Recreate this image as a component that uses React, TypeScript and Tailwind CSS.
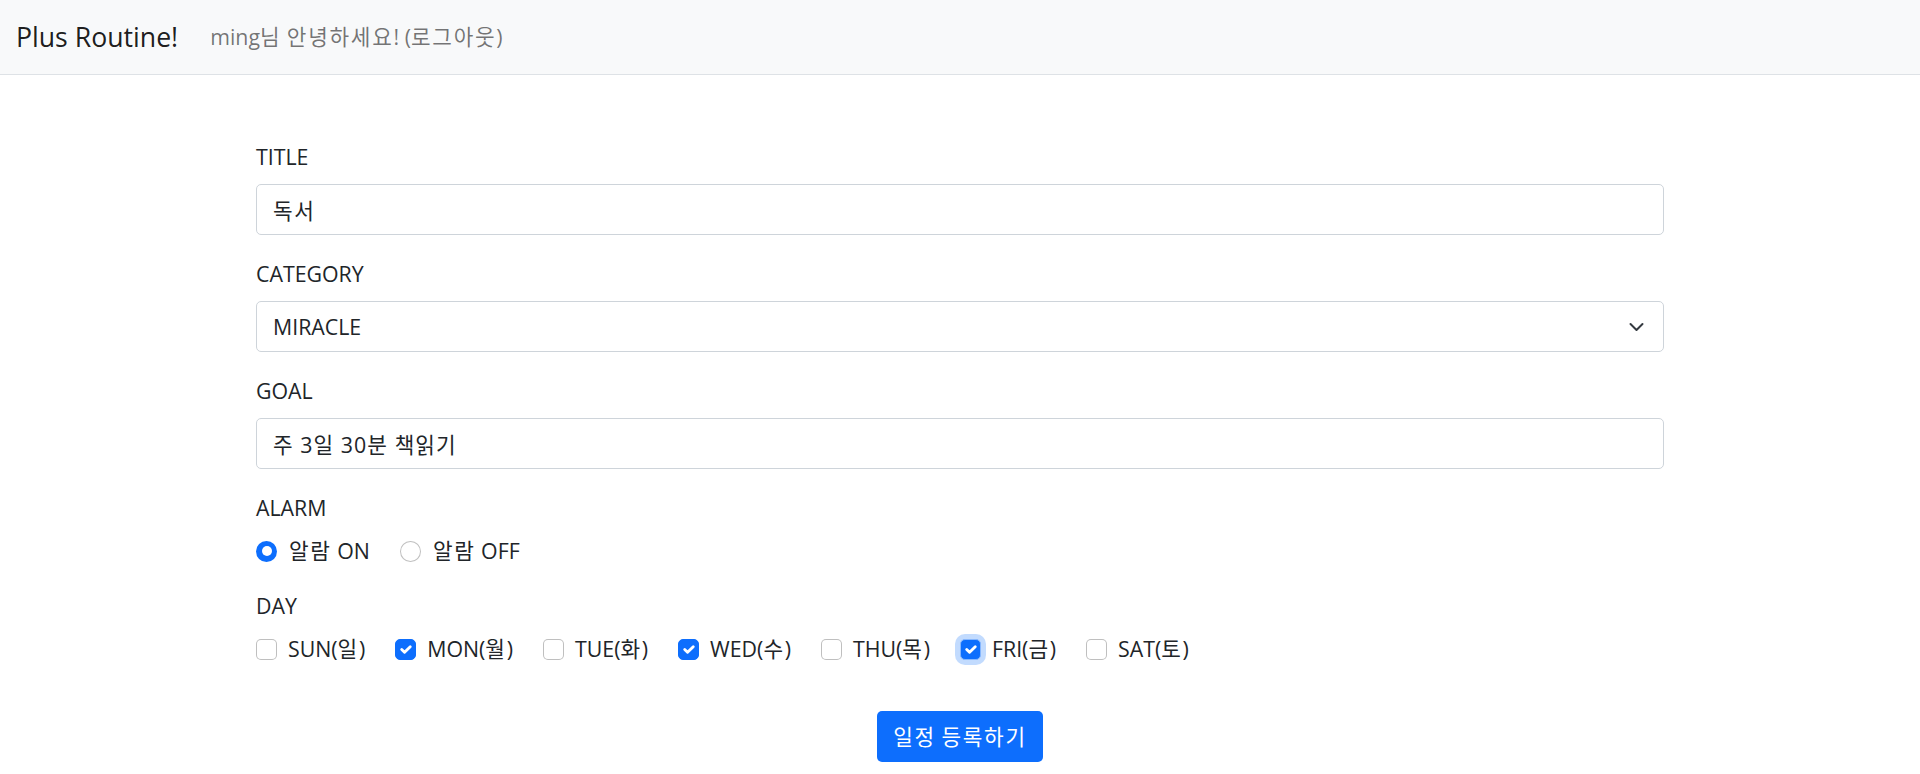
import { ReactNode } from "react";

const days = [
  { label: "SUN(일)", checked: false },
  { label: "MON(월)", checked: true },
  { label: "TUE(화)", checked: false },
  { label: "WED(수)", checked: true },
  { label: "THU(목)", checked: false },
  { label: "FRI(금)", checked: true, focus: true },
  { label: "SAT(토)", checked: false },
];

// hangul glyphs in the screenshot are a full em wide, Noto's are narrower
const K = ({ text }: { text: string }) => (
  <>
    {text.split(/([가-힣]+)/).map((part, i) =>
      /[가-힣]/.test(part) ? (
        <span key={i} className="tracking-[0.08em]">
          {part}
        </span>
      ) : (
        part
      )
    )}
  </>
);

const Field = ({ label, children }: { label: string; children: ReactNode }) => (
  <div className="mb-[23px]">
    <div className="text-[21.33px] leading-[32px] mb-[11px]">{label}</div>
    {children}
  </div>
);

const Radio = ({ label, checked }: { label: string; checked?: boolean }) => (
  <label className="inline-flex items-center mr-[30px] h-[32px]">
    <span
      className={
        checked
          ? "w-[21px] h-[21px] rounded-full bg-[#0d6efd] flex items-center justify-center"
          : "w-[21px] h-[21px] rounded-full border border-[rgba(0,0,0,0.25)] bg-white"
      }
    >
      {checked && <span className="w-[10px] h-[10px] rounded-full bg-white" />}
    </span>
    <span className="ml-[12px] text-[21.33px] leading-[32px]">
      <K text={label} />
    </span>
  </label>
);

const Check = ({ label, checked, focus }: { label: string; checked?: boolean; focus?: boolean }) => (
  <label className="inline-flex items-center mr-[30px] h-[32px]">
    <span
      className={
        (checked
          ? "bg-[#0d6efd] border-[#0d6efd] "
          : "bg-white border-[rgba(0,0,0,0.25)] ") +
        (focus ? "shadow-[0_0_0_5px_rgba(13,110,253,0.25)] border-[#86b7fe] " : "") +
        "w-[21px] h-[21px] rounded-[5px] border flex items-center justify-center"
      }
    >
      {checked && (
        <svg viewBox="0 0 20 20" className="w-[21px] h-[21px]">
          <path
            d="m6 10 3 3 6-6"
            fill="none"
            stroke="#fff"
            strokeWidth="3"
            strokeLinecap="round"
            strokeLinejoin="round"
          />
        </svg>
      )}
    </span>
    <span className="ml-[11px] text-[21.33px] leading-[32px]">
      <K text={label} />
    </span>
  </label>
);

export default function App() {
  return (
    <div className="min-h-screen bg-white text-[#212529] font-['Open_Sans','Noto_Sans_CJK_KR',sans-serif]">
      {/* Navbar */}
      <nav className="h-[75px] bg-[#f8f9fa] border-b border-[#dee2e6] flex items-center px-[16px]">
        <span className="text-[26.67px] leading-[40px] text-[rgba(0,0,0,0.9)] mr-[21px]">
          Plus Routine!
        </span>
        <a className="text-[21.33px] leading-[32px] px-[11px] text-[rgba(0,0,0,0.55)]">
          <K text="ming님 안녕하세요! (로그아웃)" />
        </a>
      </nav>

      {/* Form */}
      <form className="w-[1408px] mx-auto pt-[66px]">
        <Field label="TITLE">
          <input
            defaultValue="독서"
            className="w-full h-[51px] px-[16px] border border-[#ced4da] rounded-[5px] text-[21.33px] tracking-[0.08em] outline-none"
          />
        </Field>

        <Field label="CATEGORY">
          <div className="w-full h-[51px] pl-[16px] pr-[16px] border border-[#ced4da] rounded-[5px] flex items-center justify-between text-[21.33px]">
            <span>MIRACLE</span>
            <svg viewBox="0 0 16 16" className="w-[21px] h-[16px]">
              <path
                d="m2 5 6 6 6-6"
                fill="none"
                stroke="#343a40"
                strokeWidth="2"
                strokeLinecap="round"
                strokeLinejoin="round"
              />
            </svg>
          </div>
        </Field>

        <Field label="GOAL">
          <input
            defaultValue="주 3일 30분 책읽기"
            className="w-full h-[51px] px-[16px] border border-[#ced4da] rounded-[5px] text-[21.33px] tracking-[0.05em] outline-none"
          />
        </Field>

        <Field label="ALARM">
          <div className="flex">
            <Radio label="알람 ON" checked />
            <Radio label="알람 OFF" />
          </div>
        </Field>

        <div>
          <div className="text-[21.33px] leading-[32px] mb-[11px]">DAY</div>
          <div className="flex">
            {days.map((d) => (
              <Check key={d.label} label={d.label} checked={d.checked} focus={d.focus} />
            ))}
          </div>
        </div>

        <div className="flex justify-center mt-[46px]">
          <button
            type="button"
            className="h-[51px] px-[16px] bg-[#0d6efd] text-white text-[21.33px] rounded-[5px]"
          >
            <K text="일정 등록하기" />
          </button>
        </div>
      </form>
    </div>
  );
}
